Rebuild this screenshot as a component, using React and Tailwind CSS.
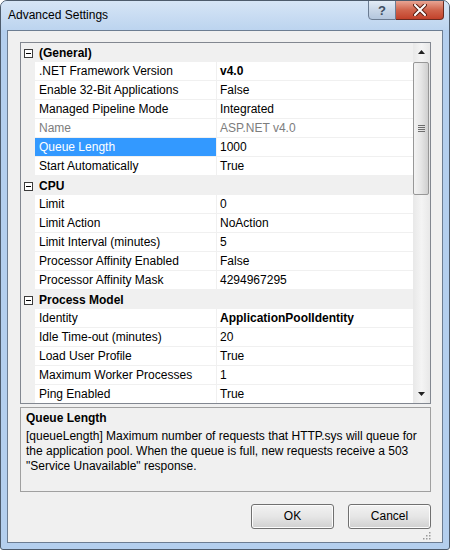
import React from 'react';

const sections = [
  {
    title: '(General)',
    rows: [
      { name: '.NET Framework Version', value: 'v4.0', bold: true },
      { name: 'Enable 32-Bit Applications', value: 'False' },
      { name: 'Managed Pipeline Mode', value: 'Integrated' },
      { name: 'Name', value: 'ASP.NET v4.0', disabled: true },
      { name: 'Queue Length', value: '1000', selected: true },
      { name: 'Start Automatically', value: 'True' },
    ],
  },
  {
    title: 'CPU',
    rows: [
      { name: 'Limit', value: '0' },
      { name: 'Limit Action', value: 'NoAction' },
      { name: 'Limit Interval (minutes)', value: '5' },
      { name: 'Processor Affinity Enabled', value: 'False' },
      { name: 'Processor Affinity Mask', value: '4294967295' },
    ],
  },
  {
    title: 'Process Model',
    rows: [
      { name: 'Identity', value: 'ApplicationPoolIdentity', bold: true },
      { name: 'Idle Time-out (minutes)', value: '20' },
      { name: 'Load User Profile', value: 'True' },
      { name: 'Maximum Worker Processes', value: '1' },
      { name: 'Ping Enabled', value: 'True' },
    ],
  },
];

function CategoryRow({ title }) {
  return (
    <div className="flex h-[19px] shrink-0 items-center bg-[#f0f0f0] pt-[1px]">
      <div className="flex w-[14px] justify-center pl-[1px]">
        <div className="flex h-[9px] w-[9px] items-center justify-center border border-[#3c3c3c] bg-white">
          <div className="h-px w-[5px] bg-black" />
        </div>
      </div>
      <div className="pl-[4px] font-bold">{title}</div>
    </div>
  );
}

function PropRow({ row }) {
  const color = row.disabled ? 'text-[#7d7d7d]' : 'text-black';
  return (
    <div className="flex h-[19px] shrink-0">
      <div className="w-[14px] bg-[#f0f0f0]" />
      <div
        className={
          row.selected
            ? 'flex w-[181px] items-center border-b border-[#f0f0f0] bg-[#3399ff] pl-[4px] pt-[1px] text-white'
            : `flex w-[181px] items-center border-b border-[#f0f0f0] bg-white pl-[4px] pt-[1px] ${color}`
        }
      >
        <span className="whitespace-nowrap">{row.name}</span>
      </div>
      <div className="w-px bg-[#f0f0f0]" />
      <div className={`flex flex-1 items-center border-b border-[#f0f0f0] bg-white pl-[3px] pt-[1px] ${color} ${row.bold ? 'font-bold' : ''}`}>
        <span className="whitespace-nowrap">{row.value}</span>
      </div>
    </div>
  );
}

function ScrollBar() {
  return (
    <div className="flex w-[17px] flex-col bg-[#f0f0f0] bg-gradient-to-r from-[#e8e8e8] via-[#f4f4f4] to-[#e8e8e8]">
      <div className="flex h-[18px] items-center justify-center">
        <svg width="7" height="4" viewBox="0 0 7 4">
          <polygon points="3.5,0 7,4 0,4" fill="#222" />
        </svg>
      </div>
      <div className="mr-[1px] mt-px flex h-[133px] items-center justify-center rounded-[2px] border border-[#979797] bg-gradient-to-r from-[#f3f3f3] via-[#e6e6e6] to-[#cfcfcf]">
        <div className="flex flex-col gap-[1px]">
          <div className="h-px w-[7px] bg-[#6d6d6d]" />
          <div className="h-px w-[7px] bg-[#6d6d6d]" />
          <div className="h-px w-[7px] bg-[#6d6d6d]" />
          <div className="h-px w-[7px] bg-[#6d6d6d]" />
        </div>
      </div>
      <div className="flex-1" />
      <div className="flex h-[18px] items-center justify-center">
        <svg width="7" height="4" viewBox="0 0 7 4">
          <polygon points="0,0 7,0 3.5,4" fill="#222" />
        </svg>
      </div>
    </div>
  );
}

function WinButton({ children }) {
  return (
    <button className="flex h-[25px] w-[83px] items-center justify-center rounded-[3px] border border-[#707070] bg-gradient-to-b from-[#f2f2f2] via-[#e6e6e6] to-[#d0d0d0] text-black shadow-[inset_0_0_0_1px_#fcfcfc]">
      {children}
    </button>
  );
}

export default function App() {
  return (
    <div className="relative h-[550px] w-[450px] overflow-hidden rounded-t-[7px] rounded-b-[3px] border border-[#4d5b6c] bg-[#b4cfee] font-['Liberation_Sans',Arial,sans-serif] text-[12px] leading-[15px] text-black">
      {/* title bar */}
      <div className="flex h-[29px] items-center bg-gradient-to-b from-[#d6e5f6] to-[#bcd4ef] pl-[7px]">
        <span className="text-[12px]">Advanced Settings</span>
      </div>

      {/* caption buttons */}
      <div className="absolute right-[5px] top-[-1px] flex h-[20px]">
        <div className="flex w-[28px] items-center justify-center rounded-bl-[4px] border border-[#6b7c92] bg-gradient-to-b from-[#e3ecf6] via-[#c9d7e8] to-[#b3c6dd] text-[13px] font-bold text-[#3e4d60]">
          ?
        </div>
        <div className="flex w-[48px] items-center justify-center rounded-br-[4px] border border-l-0 border-[#6b2a20] bg-gradient-to-b from-[#e8a493] via-[#d0644c] to-[#c2412a]">
          <svg width="14" height="12" viewBox="0 0 14 12">
            <path d="M2 1 L12 11 M12 1 L2 11" stroke="#5a2015" strokeWidth="4" strokeLinecap="round" />
            <path d="M2 1 L12 11 M12 1 L2 11" stroke="#ffffff" strokeWidth="2" strokeLinecap="round" />
          </svg>
        </div>
      </div>

      {/* client area */}
      <div className="mx-[6px] flex h-[513px] flex-col border border-[#6c7d92] bg-[#f0f0f0] pl-[12px] pr-[11px] pt-[11px]">
        <div className="flex h-[362px] shrink-0 overflow-hidden border border-[#828790] bg-white">
          <div className="flex flex-1 flex-col">
            {sections.map((s) => (
              <React.Fragment key={s.title}>
                <CategoryRow title={s.title} />
                {s.rows.map((r) => (
                  <PropRow key={r.name} row={r} />
                ))}
              </React.Fragment>
            ))}
          </div>
          <ScrollBar />
        </div>

        <div className="mt-[3px] h-[85px] shrink-0 border border-[#a0a0a0] pl-[5px] pt-[3px]">
          <div className="font-bold">Queue Length</div>
          <div className="mt-[3px] whitespace-nowrap">
            <div>[queueLength] Maximum number of requests that HTTP.sys will queue for</div>
            <div>the application pool. When the queue is full, new requests receive a 503</div>
            <div>"Service Unavailable" response.</div>
          </div>
        </div>

        <div className="mt-[12px] flex justify-end gap-[14px]">
          <WinButton>OK</WinButton>
          <WinButton>Cancel</WinButton>
        </div>

        <div className="flex flex-1 items-end justify-end pb-[2px]">
          <svg width="9" height="9" viewBox="0 0 9 9">
            {[[7, 1], [4, 4], [7, 4], [1, 7], [4, 7], [7, 7]].map(([x, y]) => (
              <rect key={`${x}-${y}`} x={x} y={y} width="1.5" height="1.5" fill="#9a9a9a" />
            ))}
          </svg>
        </div>
      </div>
    </div>
  );
}
